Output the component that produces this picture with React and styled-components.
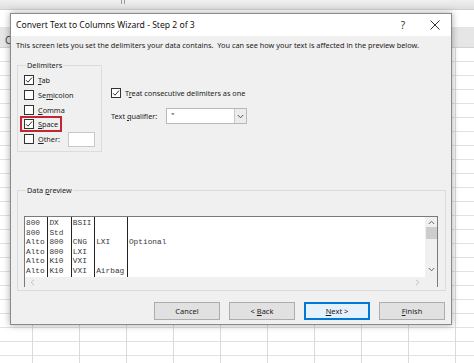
import React from "react";
import styled, { createGlobalStyle } from "styled-components";

const GlobalStyle = createGlobalStyle`
  body {
    margin: 0;
    background: #fff;
  }
  * {
    box-sizing: border-box;
  }
`;

const UI = `"Noto Sans", "Open Sans", sans-serif`;

const Sheet = styled.div`
  position: relative;
  width: 474px;
  height: 363px;
  overflow: hidden;
  display: flex;
  flex-direction: column;
  font-family: ${UI};
  background: #fff;
`;

const TopStrip = styled.div`
  height: 10px;
  background: linear-gradient(#f0f0f0, #dedede);
  border-bottom: 1px solid #d0d0d0;
  position: relative;
  .grip {
    position: absolute;
    left: 121px;
    top: 0;
    width: 4px;
    height: 4px;
    border-left: 1px solid #999;
    border-right: 1px solid #999;
  }
`;

const FormulaArea = styled.div`
  height: 18px;
  border-bottom: 1px solid #e4e4e4;
`;

const HeaderRow = styled.div`
  height: 20px;
  background: #e6e6e6;
  border-bottom: 1px solid #d2d2d2;
  font-size: 10px;
  color: #444;
  padding: 5px 0 0 5px;
`;

const Grid = styled.div`
  flex: 1;
  background-image: repeating-linear-gradient(
      to right,
      transparent 0 32px,
      #dadada 32px 33px,
      transparent 33px 47px
    ),
    repeating-linear-gradient(
      to bottom,
      transparent 0 13px,
      #e2e2e2 13px 14px
    );
`;

const Dialog = styled.div`
  position: absolute;
  left: 10px;
  top: 13px;
  width: 442px;
  height: 312px;
  background: #f0f0f0;
  border: 1px solid #8a8a8a;
  box-shadow: 0 0 7px rgba(0, 0, 0, 0.35);
  display: flex;
  flex-direction: column;
`;

const TitleBar = styled.div`
  height: 22px;
  background: #fff;
  display: flex;
  align-items: center;
  padding-left: 5px;
  font-size: 8.6px;
  color: #111;
`;

const Title = styled.div`
  flex: 1;
`;

const TitleButton = styled.div`
  width: 32px;
  height: 22px;
  display: flex;
  align-items: center;
  justify-content: center;
  font-size: 10px;
  color: #333;
`;

const Body = styled.div`
  flex: 1;
  display: flex;
  flex-direction: column;
  padding: 4px 6px 4px 6px;
  font-size: 7.3px;
  color: #222;
`;

const Intro = styled.div`
  height: 10px;
  line-height: 10px;
  font-size: 7.35px;
  margin-left: -1px;
  white-space: nowrap;
`;

const TopRow = styled.div`
  display: flex;
  margin-top: 10px;
`;

const Group = styled.fieldset`
  margin: 0;
  border: 1px solid #dcdcdc;
  padding: ${(p) => p.$pad};
  width: ${(p) => p.$width};
  height: ${(p) => p.$height};
  min-width: 0;
  legend {
    padding: 0 1px;
    margin-left: 2px;
    font-size: 7.3px;
    line-height: 10px;
  }
`;

const Option = styled.div`
  display: flex;
  align-items: center;
  height: 14.7px;
  gap: 4px;
`;

const OptionInner = styled.span`
  display: inline-flex;
  align-items: center;
  gap: 4px;
  padding: 2px 3px 2px 3px;
  margin-left: -3px;
  outline: ${(p) => (p.$highlight ? "2px solid #c3262e" : "none")};
  outline-offset: -1px;
`;

const Box = styled.span`
  width: 10px;
  height: 10px;
  border: 1px solid #333;
  background: #fff;
  display: inline-flex;
  align-items: center;
  justify-content: center;
  flex-shrink: 0;
`;

const SmallInput = styled.div`
  width: 27px;
  height: 15px;
  background: #fff;
  border: 1px solid #c8c8c8;
  margin-left: 4px;
`;

const RightCol = styled.div`
  display: flex;
  flex-direction: column;
  margin-left: 9px;
  padding-top: 26px;
`;

const Row = styled.div`
  display: flex;
  align-items: center;
  gap: 4px;
  height: 14px;
`;

const QualifierRow = styled.div`
  display: flex;
  align-items: center;
  margin-top: 8px;
`;

const Select = styled.div`
  margin-left: 9px;
  width: 81px;
  height: 16px;
  background: #fff;
  border: 1px solid #b8b8b8;
  display: flex;
  align-items: stretch;
  .val {
    flex: 1;
    padding: 1px 0 0 4px;
  }
  .btn {
    width: 12px;
    background: #ececec;
    border-left: 1px solid #c8c8c8;
    display: flex;
    align-items: center;
    justify-content: center;
  }
`;

const PreviewGroupWrap = styled.div`
  margin-top: 33px;
`;

const PreviewFrame = styled.div`
  display: grid;
  grid-template-columns: 1fr 12px;
  grid-template-rows: 60px 10px;
  border: 1px solid #7a7a7a;
  border-bottom: none;
  background: #f0f0f0;
`;

const PreviewArea = styled.div`
  background: #fff;
  display: flex;
  overflow: hidden;
`;

const PreviewCol = styled.div`
  width: ${(p) => (p.$ch ? `${p.$ch * 4.68}px` : "auto")};
  flex: ${(p) => (p.$ch ? "none" : "1")};
  border-right: ${(p) => (p.$ch ? "1px solid #222" : "none")};
  padding: 2px 0 0 1px;
  font-family: "Liberation Mono", "Courier New", monospace;
  font-size: 7.8px;
  line-height: 9.5px;
  color: #3a3a3a;
  white-space: pre;
`;

const VScroll = styled.div`
  display: flex;
  flex-direction: column;
  align-items: center;
  padding-top: 3px;
  .thumb {
    width: 11px;
    height: 12px;
    background: #cdcdcd;
    margin-top: 2px;
  }
  .down {
    margin-top: auto;
    margin-bottom: 3px;
  }
`;

const HScroll = styled.div`
  display: flex;
  align-items: center;
  justify-content: space-between;
  padding: 0 5px;
`;

const ButtonRow = styled.div`
  display: flex;
  justify-content: flex-end;
  gap: 9px;
  margin-top: auto;
`;

const Button = styled.div`
  width: 66px;
  height: 18px;
  display: flex;
  align-items: center;
  justify-content: center;
  font-size: 7.5px;
  color: #222;
  background: ${(p) => (p.$default ? "#e5f1fb" : "#e1e1e1")};
  border: 1px solid ${(p) => (p.$default ? "#0078d7" : "#adadad")};
  box-shadow: ${(p) => (p.$default ? "inset 0 0 0 1px #0078d7" : "none")};
`;

const Check = () => (
  <svg width="8" height="8" viewBox="0 0 8 8">
    <path d="M1 4.2 L3 6.2 L7 1.5" fill="none" stroke="#333" strokeWidth="1" />
  </svg>
);

const Chevron = ({ dir = "down", color = "#555" }) => (
  <svg width="7" height="5" viewBox="0 0 7 5">
    <path
      d={dir === "down" ? "M0.8 1 L3.5 3.8 L6.2 1" : "M0.8 4 L3.5 1.2 L6.2 4"}
      fill="none"
      stroke={color}
      strokeWidth="1"
    />
  </svg>
);

const Side = ({ dir }) => (
  <svg width="5" height="7" viewBox="0 0 5 7">
    <path
      d={dir === "left" ? "M4 0.8 L1.2 3.5 L4 6.2" : "M1 0.8 L3.8 3.5 L1 6.2"}
      fill="none"
      stroke="#bdbdbd"
      strokeWidth="1"
    />
  </svg>
);

const Checkbox = ({ checked }) => <Box>{checked && <Check />}</Box>;

const delimiters = [
  { key: "tab", label: <><u>T</u>ab</>, checked: true },
  { key: "semi", label: <>Se<u>m</u>icolon</> },
  { key: "comma", label: <><u>C</u>omma</> },
  { key: "space", label: <><u>S</u>pace</>, checked: true, highlight: true },
];

const columns = [
  { ch: 5, lines: ["800", "800", "Alto", "Alto", "Alto", "Alto"] },
  { ch: 5, lines: ["DX", "Std", "800", "800", "K10", "K10"] },
  { ch: 5, lines: ["BSII", "", "CNG", "LXI", "VXI", "VXI"] },
  { ch: 7, lines: ["", "", "LXI", "", "", "Airbag"] },
  { ch: 0, lines: ["", "", "Optional", "", "", ""] },
];

export default function App() {
  return (
    <>
      <GlobalStyle />
      <Sheet>
        <TopStrip>
          <span className="grip" />
        </TopStrip>
        <FormulaArea />
        <HeaderRow>C</HeaderRow>
        <Grid />

        <Dialog>
          <TitleBar>
            <Title>Convert Text to Columns Wizard - Step 2 of 3</Title>
            <TitleButton>?</TitleButton>
            <TitleButton>
              <svg width="10" height="10" viewBox="0 0 10 10">
                <path d="M0.5 0.5 L9.5 9.5 M9.5 0.5 L0.5 9.5" stroke="#333" strokeWidth="1" />
              </svg>
            </TitleButton>
          </TitleBar>

          <Body>
            <Intro>
              This screen lets you set the delimiters your data contains.&nbsp; You can see how your text is
              affected in the preview below.
            </Intro>

            <TopRow>
              <Group $width="85px" $height="92px" $pad="3px 0 0 6px">
                <legend>Delimiters</legend>
                {delimiters.map((d) => (
                  <Option key={d.key}>
                    <OptionInner $highlight={d.highlight}>
                      <Checkbox checked={d.checked} />
                      <span>{d.label}</span>
                    </OptionInner>
                  </Option>
                ))}
                <Option>
                  <Checkbox />
                  <span>
                    <u>O</u>ther:
                  </span>
                  <SmallInput />
                </Option>
              </Group>

              <RightCol>
                <Row>
                  <Checkbox checked />
                  <span>
                    T<u>r</u>eat consecutive delimiters as one
                  </span>
                </Row>
                <QualifierRow>
                  <span>
                    Text <u>q</u>ualifier:
                  </span>
                  <Select>
                    <span className="val">"</span>
                    <span className="btn">
                      <Chevron />
                    </span>
                  </Select>
                </QualifierRow>
              </RightCol>
            </TopRow>

            <PreviewGroupWrap>
              <Group $width="429px" $height="106px" $pad="21px 7px 0 6px">
                <legend>
                  Data <u>p</u>review
                </legend>
                <PreviewFrame>
                  <PreviewArea>
                    {columns.map((c, i) => (
                      <PreviewCol key={i} $ch={c.ch}>
                        {c.lines.join("\n")}
                      </PreviewCol>
                    ))}
                  </PreviewArea>
                  <VScroll>
                    <Chevron dir="up" color="#666" />
                    <span className="thumb" />
                    <span className="down">
                      <Chevron color="#666" />
                    </span>
                  </VScroll>
                  <HScroll>
                    <Side dir="left" />
                    <Side dir="right" />
                  </HScroll>
                  <div />
                </PreviewFrame>
              </Group>
            </PreviewGroupWrap>

            <ButtonRow>
              <Button>Cancel</Button>
              <Button>
                <span>
                  &lt; <u>B</u>ack
                </span>
              </Button>
              <Button $default>
                <span>
                  <u>N</u>ext &gt;
                </span>
              </Button>
              <Button>
                <u>F</u>inish
              </Button>
            </ButtonRow>
          </Body>
        </Dialog>
      </Sheet>
    </>
  );
}
